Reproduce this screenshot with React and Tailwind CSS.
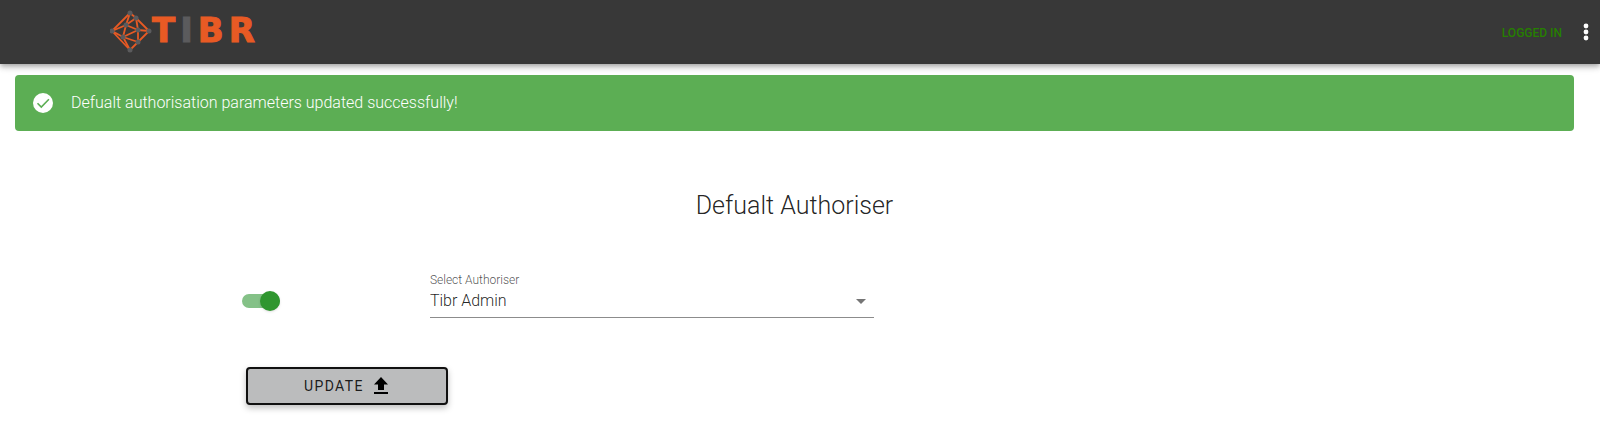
import React, { useState } from "react";

const NODES = [
  [20, 3], [26, 8], [16, 15], [28, 20], [2, 21], [39, 21], [13, 27], [28, 32], [20, 40],
];
const EDGES = [
  [0, 4], [0, 2], [0, 1], [1, 2], [1, 3], [1, 5], [2, 4], [2, 3], [2, 6], [3, 5],
  [3, 6], [3, 7], [4, 6], [4, 8], [6, 8], [6, 7], [7, 8], [5, 7],
];

function Logo() {
  return (
    <a href="#home" aria-label="TIBR" className="flex h-full items-center">
      <svg width="42" height="44" viewBox="0 0 42 44" aria-hidden="true">
        {EDGES.map(([a, b]) => (
          <line
            key={`${a}-${b}`}
            x1={NODES[a][0]}
            y1={NODES[a][1]}
            x2={NODES[b][0]}
            y2={NODES[b][1]}
            stroke="#e85a24"
            strokeWidth="1.8"
          />
        ))}
        {NODES.map(([x, y]) => (
          <circle key={`${x}-${y}`} cx={x} cy={y} r="2.5" fill="#5b5b5d" />
        ))}
      </svg>
      <span className="flex gap-[5px] pb-1 font-['DejaVu_Sans',sans-serif] text-[34px] leading-none font-bold text-[#e85a24] [-webkit-text-stroke:1px_currentColor]">
        <span>T</span>
        <span className="text-[#5b5b5d]">I</span>
        <span>B</span>
        <span>R</span>
      </span>
    </a>
  );
}

function Header() {
  return (
    <header className="flex h-16 items-center justify-between bg-[#383838] pr-[2px] pl-[110px] shadow-[0_2px_4px_-1px_rgba(0,0,0,0.2),0_4px_5px_rgba(0,0,0,0.14),0_1px_10px_rgba(0,0,0,0.12)]">
      <Logo />
      <div className="flex items-center gap-3">
        <span className="pt-px text-xs font-medium text-[#267f00]">LOGGED IN</span>
        <button type="button" aria-label="Menu" className="text-white">
          <svg width="24" height="24" viewBox="0 0 24 24" fill="currentColor" aria-hidden="true">
            <circle cx="12" cy="6" r="2.4" />
            <circle cx="12" cy="12" r="2.4" />
            <circle cx="12" cy="18" r="2.4" />
          </svg>
        </button>
      </div>
    </header>
  );
}

export default function App() {
  const [enabled, setEnabled] = useState(true);
  return (
    <div className="bg-white font-[Roboto,sans-serif] font-light text-black/87">
      <Header />
      <main className="pt-[11px] pr-[26px] pb-6 pl-[15px]">
        <div role="status" className="flex items-center gap-4 rounded bg-[#5cae54] p-4 text-white">
          <svg width="24" height="24" viewBox="0 0 24 24" aria-hidden="true">
            <circle cx="12" cy="12" r="10" fill="#fff" />
            <path d="M6.5 12.2l3.8 3.8 7.6-7.7" fill="none" stroke="#5cae54" strokeWidth="1.6" />
          </svg>
          <p className="text-base leading-6">Defualt authorisation parameters updated successfully!</p>
        </div>

        <h1 className="mt-[59px] text-center text-[25px] leading-8">Defualt Authoriser</h1>

        <form className="mt-[50px] ml-[14.3%] w-[70.8%]" onSubmit={(e) => e.preventDefault()}>
          <div className="grid grid-cols-12">
            <label className="col-span-2 flex h-[34px] items-center self-end pl-1">
              <input
                type="checkbox"
                role="switch"
                aria-label="Enable default authoriser"
                checked={enabled}
                onChange={(e) => setEnabled(e.target.checked)}
                className="peer sr-only"
              />
              <span className="flex h-[14px] w-[38px] items-center rounded-full bg-[#bdbdbd] peer-checked:justify-end peer-checked:bg-[#84c187] peer-checked:[&>span]:bg-[#2f962f]">
                <span className="size-5 rounded-full bg-[#fafafa] shadow-sm" />
              </span>
            </label>
            <div className="col-span-5 flex flex-col px-2">
              <label htmlFor="authoriser" className="text-xs leading-4 text-black/70">
                Select Authoriser
              </label>
              <div className="grid items-center border-b border-[#8c8c8c]">
                <select
                  id="authoriser"
                  defaultValue="admin"
                  className="col-start-1 row-start-1 h-[29px] w-full appearance-none bg-transparent pb-[3px] text-base outline-none"
                >
                  <option value="admin">Tibr Admin</option>
                </select>
                <svg
                  className="pointer-events-none col-start-1 row-start-1 mr-2 mb-[3px] justify-self-end"
                  width="10"
                  height="5"
                  viewBox="0 0 10 5"
                  aria-hidden="true"
                >
                  <path d="M0 0h10L5 5z" fill="#757575" />
                </svg>
              </div>
            </div>
          </div>
          <button
            type="submit"
            className="mt-[49px] ml-2 flex h-[38px] w-[202px] items-center justify-center gap-2 rounded border-2 border-[#101010] bg-[#bbbcbd] text-sm font-normal tracking-widest shadow-[0_3px_6px_rgba(0,0,0,0.25)]"
          >
            UPDATE
            <svg width="18" height="18" viewBox="0 0 18 18" fill="#000" aria-hidden="true">
              <path d="M9 0l7 7.5h-4V13H6V7.5H2zM2 15h14v2H2z" />
            </svg>
          </button>
        </form>
      </main>
    </div>
  );
}
